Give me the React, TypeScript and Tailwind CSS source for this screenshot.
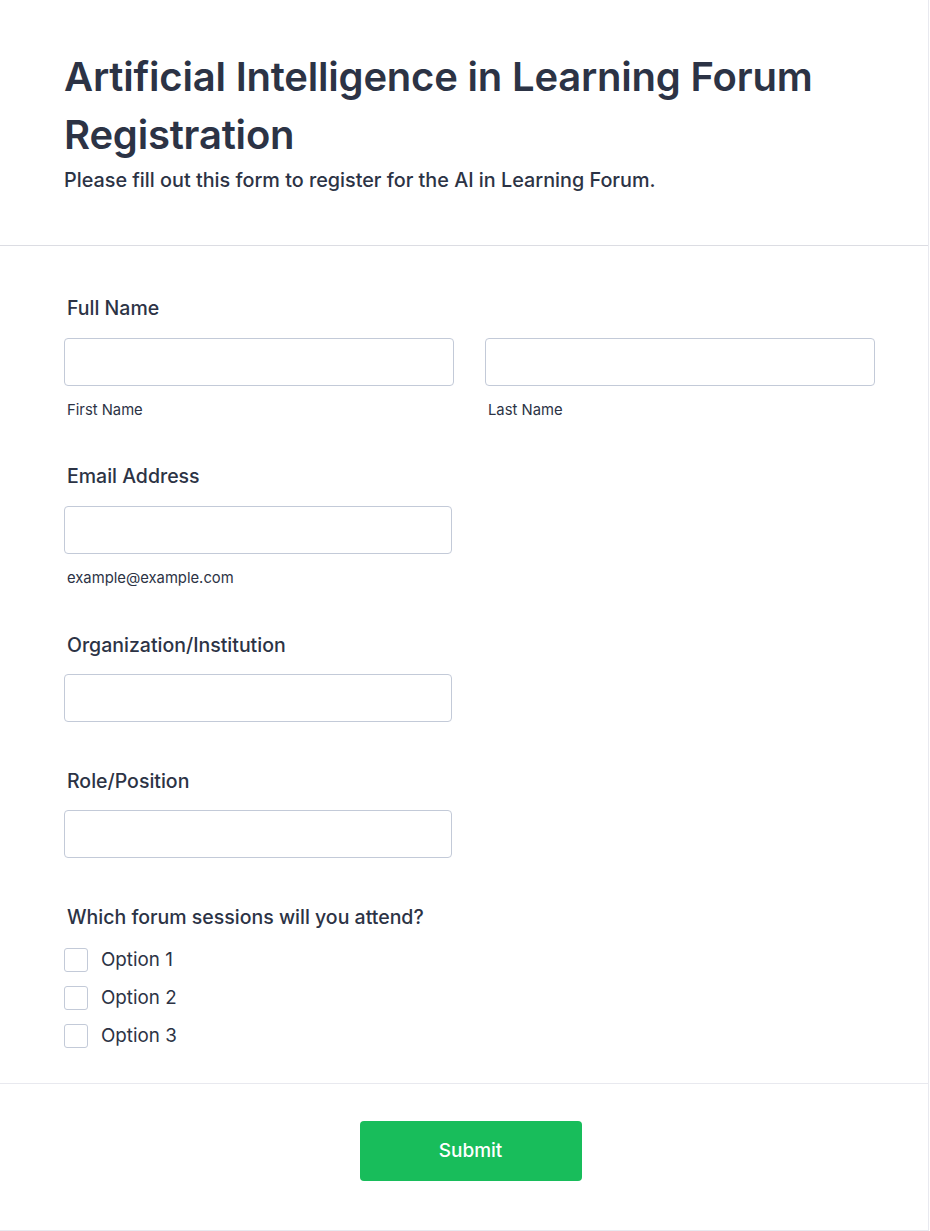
import React from "react";

const inputCls =
  "block h-12 w-full rounded border border-[#c3cad8] bg-white px-3 text-base text-[#2c3345] outline-none";
const labelCls = "block pl-[3px] text-[19.5px] leading-7 font-medium";
const subCls = "mt-[14px] block pl-[3px] text-[14.8px] leading-5";

export default function App() {
  const options = ["Option 1", "Option 2", "Option 3"];

  return (
    <div className="min-h-[1231px] w-[930px] bg-white font-['Inter','Liberation_Sans',sans-serif] text-[#2c3345]">
      <div className="w-[929px] border-r border-b border-[#e8e9ef]">
        {/* Header */}
        <div className="border-b border-[#dcdde3] px-16 pt-12 pb-[51px]">
          <h1 className="text-[40px] leading-[58px] font-semibold tracking-[-0.2px]">
            Artificial Intelligence in Learning Forum Registration
          </h1>
          <p className="mt-0.5 text-[19.8px] leading-7 font-medium">
            Please fill out this form to register for the AI in Learning Forum.
          </p>
        </div>

        {/* Fields */}
        <div className="border-b border-[#e8e9ef] pl-16 pr-[53px] pt-12 pb-[35px]">
          {/* Full Name */}
          <div>
            <label className={labelCls}>Full Name</label>
            <div className="mt-4 flex gap-[31px]">
              <div className="flex-1">
                <input className={inputCls} />
                <span className={subCls}>First Name</span>
              </div>
              <div className="flex-1">
                <input className={inputCls} />
                <span className={subCls}>Last Name</span>
              </div>
            </div>
          </div>

          {/* Email */}
          <div className="mt-[42px] w-[388px]">
            <label className={labelCls}>Email Address</label>
            <input className={`${inputCls} mt-4`} />
            <span className={subCls}>example@example.com</span>
          </div>

          {/* Organization */}
          <div className="mt-[43px] w-[388px]">
            <label className={labelCls}>Organization/Institution</label>
            <input className={`${inputCls} mt-[15px]`} />
          </div>

          {/* Role */}
          <div className="mt-[45px] w-[388px]">
            <label className={labelCls}>Role/Position</label>
            <input className={`${inputCls} mt-[15px]`} />
          </div>

          {/* Sessions */}
          <div className="mt-[45px]">
            <label className={labelCls}>Which forum sessions will you attend?</label>
            <div className="mt-[17px] flex flex-col gap-[14px]">
              {options.map((opt) => (
                <label key={opt} className="flex items-center gap-[13px]">
                  <span className="h-6 w-6 rounded-[3px] border border-[#c3cad8] bg-white" />
                  <span className="text-[18.8px] leading-6">{opt}</span>
                </label>
              ))}
            </div>
          </div>
        </div>

        {/* Submit */}
        <div className="flex justify-center pl-[13px] pt-[37px] pb-[49px]">
          <button className="h-[60px] w-[222px] rounded bg-[#18bd5b] text-[19px] font-medium text-white">
            Submit
          </button>
        </div>
      </div>
    </div>
  );
}
